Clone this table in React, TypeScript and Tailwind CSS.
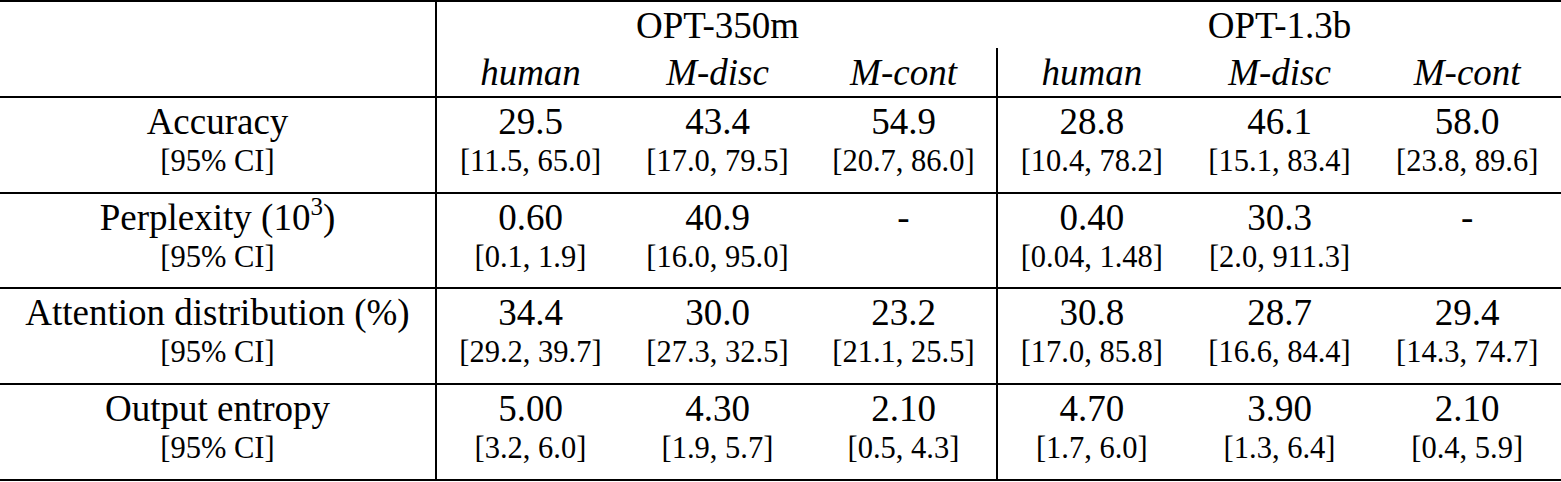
import React from "react";

type Block = {
  label: React.ReactNode;
  values: string[];
  ci: string[];
  height: string;
};

const blocks: Block[] = [
  {
    label: "Accuracy",
    values: ["29.5", "43.4", "54.9", "28.8", "46.1", "58.0"],
    ci: [
      "[11.5, 65.0]",
      "[17.0, 79.5]",
      "[20.7, 86.0]",
      "[10.4, 78.2]",
      "[15.1, 83.4]",
      "[23.8, 89.6]",
    ],
    height: "h-[96px]",
  },
  {
    label: (
      <>
        Perplexity (10<sup className="text-[25px] -top-[10px]">3</sup>)
      </>
    ),
    values: ["0.60", "40.9", "-", "0.40", "30.3", "-"],
    ci: ["[0.1, 1.9]", "[16.0, 95.0]", "", "[0.04, 1.48]", "[2.0, 911.3]", ""],
    height: "h-[95px]",
  },
  {
    label: "Attention distribution (%)",
    values: ["34.4", "30.0", "23.2", "30.8", "28.7", "29.4"],
    ci: [
      "[29.2, 39.7]",
      "[27.3, 32.5]",
      "[21.1, 25.5]",
      "[17.0, 85.8]",
      "[16.6, 84.4]",
      "[14.3, 74.7]",
    ],
    height: "h-[96px]",
  },
  {
    label: "Output entropy",
    values: ["5.00", "4.30", "2.10", "4.70", "3.90", "2.10"],
    ci: [
      "[3.2, 6.0]",
      "[1.9, 5.7]",
      "[0.5, 4.3]",
      "[1.7, 6.0]",
      "[1.3, 6.4]",
      "[0.4, 5.9]",
    ],
    height: "h-[96px]",
  },
];

const methods = ["human", "M-disc", "M-cont", "human", "M-disc", "M-cont"];

function Cell({ i, children }: { i: number; children: React.ReactNode }) {
  const width = i < 3 ? "w-[187px]" : "flex-1";
  const border = i === 2 ? "border-r-2 border-black" : "";
  return (
    <div className={`${width} ${border} flex items-center justify-center`}>
      {children}
    </div>
  );
}

function DataBlock({ block }: { block: Block }) {
  return (
    <div className={`flex border-b-2 border-black ${block.height}`}>
      <div className="w-[437px] border-r-2 border-black flex flex-col">
        <div className="h-[46px] flex items-center justify-center text-[37px] leading-none">
          {block.label}
        </div>
        <div className="h-[34px] flex items-center justify-center text-[30.5px] leading-none">
          [95% CI]
        </div>
      </div>
      {block.values.map((v, i) => (
        <Cell i={i} key={i}>
          <div className="flex flex-col w-full self-stretch">
            <div className="h-[46px] flex items-center justify-center text-[37px] leading-none whitespace-nowrap">
              {v}
            </div>
            <div className="h-[34px] flex items-center justify-center text-[30.5px] leading-none whitespace-nowrap">
              {block.ci[i]}
            </div>
          </div>
        </Cell>
      ))}
    </div>
  );
}

export default function App() {
  return (
    <div
      className="w-[1561px] h-[482px] bg-white text-black"
      style={{ fontFamily: '"Liberation Serif", "Times New Roman", serif' }}
    >
      <div className="border-t-2 border-b-2 border-black flex h-[98px]">
        <div className="w-[437px] border-r-2 border-black" />
        <div className="flex-1 flex flex-col">
          <div className="h-[46px] flex text-[37px] leading-none">
            <div className="w-[561px] flex items-center justify-center">OPT-350m</div>
            <div className="flex-1 flex items-center justify-center">OPT-1.3b</div>
          </div>
          <div className="flex-1 flex text-[37px] leading-none italic">
            {methods.map((m, i) => (
              <Cell i={i} key={i}>
                {m}
              </Cell>
            ))}
          </div>
        </div>
      </div>
      {blocks.map((b, i) => (
        <DataBlock block={b} key={i} />
      ))}
    </div>
  );
}
